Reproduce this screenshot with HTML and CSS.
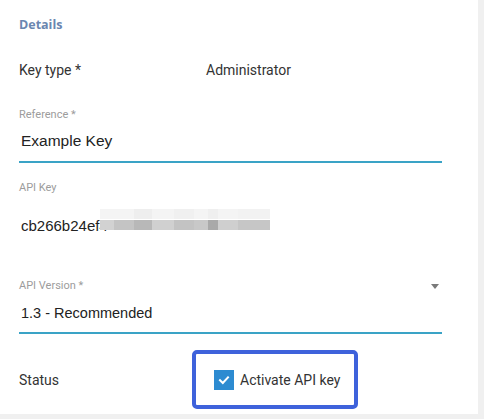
FILE: index.html
```html
<!DOCTYPE html>
<html lang="en">
<head>
<meta charset="utf-8">
<title>Details</title>
<link rel="stylesheet" href="styles.css">
</head>
<body>
<div class="panel">
  <h2 class="section-title">Details</h2>

  <div class="row row-keytype">
    <span class="row-label">Key type *</span>
    <span class="row-value">Administrator</span>
  </div>

  <div class="field field-reference">
    <label class="field-label">Reference *</label>
    <div class="field-input input-arial">Example Key</div>
  </div>

  <div class="field field-apikey">
    <label class="field-label">API Key</label>
    <div class="field-static">
      <span class="key-visible">cb266b24ef4</span>
      <span class="key-blur">
        <i class="b1"></i><i class="b2"></i><i class="b3"></i><i class="b4"></i><i class="b5"></i><i class="b6"></i><i class="b7"></i><i class="b8"></i><i class="b9"></i>
      </span>
    </div>
  </div>

  <div class="field field-version">
    <div class="label-line">
      <label class="field-label">API Version *</label>
      <span class="caret"></span>
    </div>
    <div class="field-input input-version">1.3 - Recommended</div>
  </div>

  <div class="row row-status">
    <span class="row-label status-label">Status</span>
    <div class="highlight">
      <span class="checkbox">
        <svg width="14" height="14" viewBox="0 0 14 14"><path d="M3 7.2 L5.8 10 L11 4.3" fill="none" stroke="#fff" stroke-width="2" stroke-linecap="square"/></svg>
      </span>
      <span class="check-text">Activate API key</span>
    </div>
  </div>
</div>
</body>
</html>
```

FILE: styles.css
```css
* { box-sizing: border-box; }

html, body {
  margin: 0;
  padding: 0;
}

body {
  width: 484px;
  height: 419px;
  background: #f0f0f0;
  font-family: Roboto, "Liberation Sans", Arial, sans-serif;
  color: #333;
  overflow: hidden;
}

.panel {
  width: 478px;
  height: 414px;
  background: #fff;
  padding: 17px 36px 0 19px;
}

.section-title {
  margin: 0;
  font-family: "Open Sans", "Liberation Sans", sans-serif;
  font-weight: 700;
  font-size: 12.5px;
  line-height: 16px;
  color: #6a86b0;
}

.row {
  display: flex;
  align-items: center;
}

.row-keytype {
  margin-top: 27px;
  height: 20px;
}

.row-label {
  font-size: 14px;
  color: #333;
  width: 187px;
  flex: none;
}

.row-value {
  font-size: 14px;
  color: #333;
}

.field-label {
  display: block;
  font-size: 11px;
  line-height: 14px;
  color: #9c9c9c;
}

.field-reference {
  margin-top: 28px;
}

.field-input {
  margin-top: 9px;
  padding-left: 2px;
  line-height: 20px;
  padding-bottom: 10px;
  border-bottom: 2px solid #3aa3c6;
  color: #222;
}

.input-arial {
  font-family: "Liberation Sans", Arial, sans-serif;
  font-size: 15.5px;
}

.field-apikey {
  margin-top: 18px;
}

.field-static {
  margin-top: 21px;
  padding-left: 2px;
  height: 20px;
  display: flex;
  align-items: center;
  font-family: "Liberation Sans", Arial, sans-serif;
  font-size: 15px;
  color: #222;
}

.key-visible {
  line-height: 20px;
}

.key-blur {
  display: flex;
  margin-left: -8px;
  height: 10px;
  margin-top: -2px;
}

.key-blur i {
  display: block;
  height: 10px;
  width: 19px;
  background: #c9c9c9;
  box-shadow: 0 -11px 0 #f4f4f4;
}
.key-blur .b1 { width: 14px; background: #d2d2d2; }
.key-blur .b2 { width: 20px; background: #c4c4c4; }
.key-blur .b3 { width: 18px; background: #b8b8b8; box-shadow: 0 -11px 0 #eeeeee; }
.key-blur .b4 { width: 22px; background: #d0d0d0; }
.key-blur .b5 { width: 20px; background: #c3c3c3; box-shadow: 0 -11px 0 #f0f0f0; }
.key-blur .b6 { width: 14px; background: #c8c8c8; }
.key-blur .b7 { width: 10px; background: #a9a9a9; box-shadow: 0 -11px 0 #efefef; }
.key-blur .b8 { width: 20px; background: #cfcfcf; }
.key-blur .b9 { width: 32px; background: #c6c6c6; box-shadow: 0 -11px 0 #f2f2f2; }

.field-version {
  margin-top: 43px;
}

.label-line {
  display: flex;
  align-items: center;
  justify-content: space-between;
}

.caret {
  width: 0;
  height: 0;
  margin-right: 3px;
  border-left: 4px solid transparent;
  border-right: 4px solid transparent;
  border-top: 5px solid #7a7a7a;
}

.input-version {
  margin-top: 10px;
  padding-bottom: 9px;
  font-family: "Liberation Sans", Arial, sans-serif;
  font-size: 14.5px;
}

.row-status {
  margin-top: 16px;
}

.status-label {
  width: 173px;
}

.highlight {
  width: 166px;
  height: 59px;
  border: 4px solid #3e62db;
  border-radius: 5px;
  display: flex;
  align-items: center;
  padding-left: 18px;
  gap: 6px;
}

.checkbox {
  width: 20px;
  height: 20px;
  background: #2d8bd1;
  display: flex;
  align-items: center;
  justify-content: center;
}

.check-text {
  font-size: 14px;
  color: #333;
}
```
